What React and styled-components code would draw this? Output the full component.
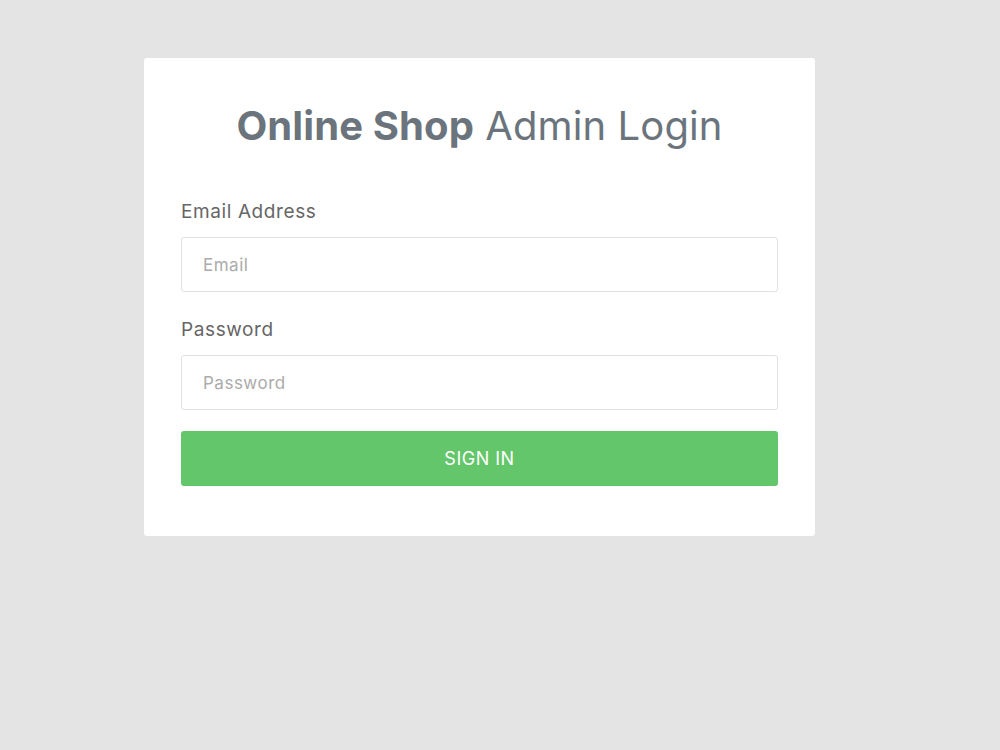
import React from 'react'
import styled, { createGlobalStyle } from 'styled-components'

const GlobalStyle = createGlobalStyle`
body {
  margin: 0;
  background: #e4e4e4;
  font-family: Inter, "Noto Sans", sans-serif;
}
`

function App() {
    return (
        <Page>
            <GlobalStyle />
            <Card>
                <Title><strong>Online Shop</strong> Admin Login</Title>
                <Form onSubmit={e => e.preventDefault()}>
                    <Field>
                        <Label htmlFor="email">Email Address</Label>
                        <Input id="email" type="email" placeholder="Email" />
                    </Field>
                    <Field>
                        <Label htmlFor="password">Password</Label>
                        <Input id="password" type="password" placeholder="Password" />
                    </Field>
                    <SubmitButton type="submit">SIGN IN</SubmitButton>
                </Form>
            </Card>
        </Page>
    )
}

const Page = styled.div`
min-height: 750px;
padding: 58px 0 0 144px;
box-sizing: border-box;
`
const Card = styled.div`
width: 671px;
box-sizing: border-box;
background: #fff;
border-radius: 3px;
padding: 41px 37px 50px;
`
const Title = styled.h1`
margin: 0 0 46px;
text-align: center;
font-size: 40px;
font-weight: 400;
line-height: 54px;
color: #6b747c;
letter-spacing: 0.1px;
strong {
  font-weight: 700;
}
`
const Form = styled.form`
display: flex;
flex-direction: column;
`
const Field = styled.div`
display: flex;
flex-direction: column;
margin-bottom: 25px;
`
const Label = styled.label`
font-size: 19px;
line-height: 26px;
letter-spacing: 0.6px;
color: #666;
margin-bottom: 12px;
`
const Input = styled.input`
height: 55px;
box-sizing: border-box;
border: 1px solid #e1e1e1;
border-radius: 3px;
padding: 0 21px;
font-family: inherit;
font-size: 17px;
letter-spacing: 0.5px;
color: #555;
outline: none;
&::placeholder {
  color: #ababab;
}
`
const SubmitButton = styled.button`
margin-top: -4px;
height: 55px;
border: none;
border-radius: 3px;
background: #63c66b;
color: #fff;
font-family: inherit;
font-size: 18px;
letter-spacing: 0.5px;
cursor: pointer;
`

export default App
